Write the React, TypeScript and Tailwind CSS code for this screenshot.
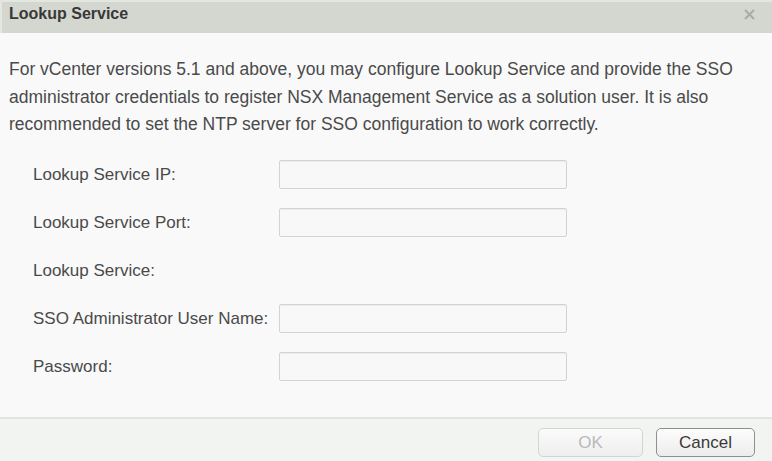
import React from "react";

const fields = [
  { label: "Lookup Service IP:", input: true },
  { label: "Lookup Service Port:", input: true },
  { label: "Lookup Service:", input: false },
  { label: "SSO Administrator User Name:", input: true },
  { label: "Password:", input: true },
];

export default function App() {
  return (
    <div className="w-[772px] h-[461px] flex flex-col bg-[#f9f9f9] font-['Liberation_Sans',Arial,sans-serif] overflow-hidden">
      {/* Title bar */}
      <div className="h-[33px] shrink-0 bg-[#d4d7cf] border-t-2 border-l-2 border-[#e4e6e0] flex items-start justify-between pl-[7px] pr-[17px] pt-[2px]">
        <span className="text-[16px] leading-[20px] font-bold text-[#383838]">Lookup Service</span>
        <svg width="11" height="11" viewBox="0 0 11 11" className="mt-[5px]">
          <path d="M1 1 L10 10 M10 1 L1 10" stroke="#a9aba6" strokeWidth="2" />
        </svg>
      </div>

      {/* Body */}
      <div className="flex-1 pl-[9px] pt-[23px]">
        <p className="text-[17.5px] leading-[27.5px] text-[#4a4a4a] w-[740px]">
          For vCenter versions 5.1 and above, you may configure Lookup Service and provide the SSO
          <br />
          administrator credentials to register NSX Management Service as a solution user. It is also
          <br />
          recommended to set the NTP server for SSO configuration to work correctly.
        </p>

        <div className="mt-[22px] pl-[24px] flex flex-col gap-[20px]">
          {fields.map((f) => (
            <div key={f.label} className="h-[28px] flex items-center">
              <span className="w-[246px] text-[17px] text-[#4a4a4a] leading-[20px]">{f.label}</span>
              {f.input && (
                <div className="w-[288px] h-[29px] border border-[#d3d3d3] rounded-[2px] bg-[#f8f8f8] shadow-[inset_0_1px_1px_rgba(0,0,0,0.05)]" />
              )}
            </div>
          ))}
        </div>
      </div>

      {/* Footer */}
      <div className="h-[44px] shrink-0 border-t-2 border-[#e3e3e3] bg-[#f1f4f1] flex items-start justify-end pt-[9px] pr-[17px] gap-[13px]">
        <button className="w-[105px] h-[29px] rounded-[5px] border border-[#d4d4d4] bg-gradient-to-b from-[#fbfbfb] to-[#eeeeee] text-[17px] text-[#b9b9b9]">
          OK
        </button>
        <button className="w-[99px] h-[29px] rounded-[5px] border border-[#8f8f8f] bg-gradient-to-b from-[#fdfdfd] to-[#ececec] text-[17px] text-[#3a3a3a]">
          Cancel
        </button>
      </div>
    </div>
  );
}
